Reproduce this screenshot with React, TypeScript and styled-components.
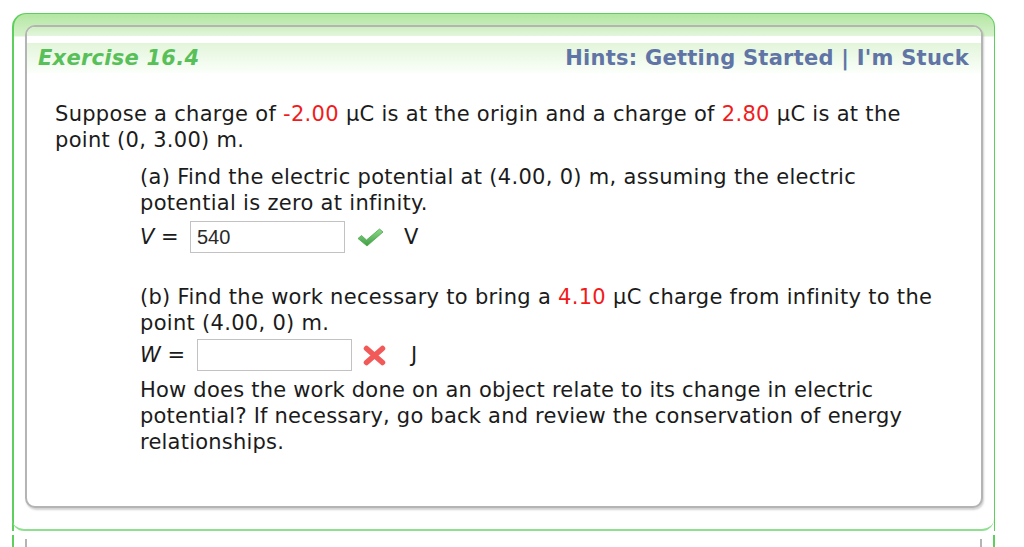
import React from 'react';
import styled, { createGlobalStyle } from 'styled-components';

const GlobalStyle = createGlobalStyle`
  html, body {
    margin: 0;
    padding: 0;
    background: #ffffff;
  }
  body {
    font-family: "DejaVu Sans", Verdana, sans-serif;
    color: #1b1b1b;
  }
`;

const green = '#5ccf5c';

const Page = styled.div`
  width: 1024px;
  height: 547px;
  overflow: hidden;
  padding-top: 13px;
  box-sizing: border-box;
`;

const Frame = styled.div`
  margin-left: 12px;
  width: 983px;
  box-sizing: border-box;
  border: 1px solid ${green};
  border-left-width: 2px;
  border-bottom: none;
  border-radius: 14px 14px 0 0;
  padding: 11px 11px 0 11px;
  background: linear-gradient(to bottom, #b3e6a2 0px, #d6f2cb 22px, #ffffff 23px);
`;

const Panel = styled.div`
  height: 483px;
  box-sizing: border-box;
  border: 2px solid #b4b4b4;
  border-radius: 10px;
  background: #ffffff;
  box-shadow: 1px 2px 2px rgba(0, 0, 0, 0.18);
  overflow: hidden;
`;

const PanelCap = styled.div`
  height: 9px;
  background: linear-gradient(to bottom, #cfefc2, #e3f6dc);
`;

const Header = styled.div`
  margin-top: 7px;
  height: 30px;
  display: flex;
  align-items: center;
  justify-content: space-between;
  padding: 0 12px 0 11px;
  background: linear-gradient(to bottom, #e2f5da, #fbfffa);
  font-size: 21px;
  font-weight: bold;
  letter-spacing: 0.25px;
`;

const Title = styled.span`
  font-style: italic;
  color: #58c058;
`;

const Hints = styled.span`
  color: #6074a6;
`;

const Body = styled.div`
  padding: 28px 20px 0 28px;
  font-size: 21px;
  line-height: 26px;
  letter-spacing: 0.3px;
`;

const Para = styled.p`
  margin: 0;
  white-space: nowrap;
`;

const Part = styled.div<{ $top: number }>`
  margin-left: 85px;
  margin-top: ${(p) => p.$top}px;
`;

const Red = styled.span`
  color: #f21b1b;
`;

const AnswerRow = styled.div<{ $top: number }>`
  display: flex;
  align-items: center;
  margin-top: ${(p) => p.$top}px;
  height: 32px;
`;

const Label = styled.span<{ $w: number }>`
  width: ${(p) => p.$w}px;
  white-space: nowrap;
  letter-spacing: 0;

  i {
    font-style: italic;
  }
`;

const Field = styled.div`
  width: 155px;
  height: 32px;
  box-sizing: border-box;
  border: 1px solid #c2c2c2;
  padding: 0 6px;
  display: flex;
  align-items: center;
  font-family: "Liberation Sans", Arial, sans-serif;
  font-size: 20px;
  letter-spacing: 0;
  color: #2a2a2a;
`;

const Mark = styled.span<{ $left: number }>`
  display: flex;
  margin-left: ${(p) => p.$left}px;
`;

const Unit = styled.span<{ $left: number }>`
  margin-left: ${(p) => p.$left}px;
`;

const Note = styled(Para)`
  margin-top: 6px;
  letter-spacing: 0.22px;
`;

const BottomRule = styled.div`
  height: 21px;
  margin: 0 -11px 0 -13px;
  border-bottom: 2px solid #8ee08e;
  border-radius: 0 0 12px 12px;
`;

const NextFrame = styled.div`
  margin-left: 12px;
  margin-top: 4px;
  width: 983px;
  height: 20px;
  box-sizing: border-box;
  border-left: 2px solid ${green};
  border-right: 2px solid ${green};
  padding: 4px 11px 0 11px;
`;

const NextPanel = styled.div`
  height: 20px;
  border-left: 2px solid #b4b4b4;
  border-right: 2px solid #b4b4b4;
`;

const CheckIcon = () => (
  <svg width="27" height="19" viewBox="0 0 27 19">
    <defs>
      <linearGradient id="chk" x1="0" y1="0" x2="0" y2="1">
        <stop offset="0" stopColor="#8fd88a" />
        <stop offset="1" stopColor="#3f9e44" />
      </linearGradient>
    </defs>
    <path
      d="M1 10.5 L4.5 7.5 L9.5 12 L22.5 1 L26 4 L10 18 Z"
      fill="url(#chk)"
      stroke="#4caa4f"
      strokeWidth="0.8"
      strokeLinejoin="round"
    />
  </svg>
);

const CrossIcon = () => (
  <svg width="23" height="21" viewBox="0 0 23 21">
    <g stroke="#f25a5a" strokeWidth="5.5" strokeLinecap="round">
      <line x1="3.5" y1="3.5" x2="19.5" y2="17.5" />
      <line x1="19.5" y1="3.5" x2="3.5" y2="17.5" />
    </g>
  </svg>
);

const App = () => (
  <React.Fragment>
    <GlobalStyle />
    <Page>
      <Frame>
        <Panel>
          <PanelCap />
          <Header>
            <Title>Exercise 16.4</Title>
            <Hints>Hints: Getting Started | I'm Stuck</Hints>
          </Header>
          <Body>
            <Para>
              Suppose a charge of <Red>-2.00</Red> μC is at the origin and a charge of{' '}
              <Red>2.80</Red> μC is at the
              <br />
              point (0, 3.00) m.
            </Para>
            <Part $top={11}>
              <Para>
                (a) Find the electric potential at (4.00, 0) m, assuming the electric
                <br />
                potential is zero at infinity.
              </Para>
              <AnswerRow $top={5}>
                <Label $w={50}>
                  <i>V</i> =
                </Label>
                <Field>540</Field>
                <Mark $left={12}>
                  <CheckIcon />
                </Mark>
                <Unit $left={20}>V</Unit>
              </AnswerRow>
            </Part>
            <Part $top={31}>
              <Para>
                (b) Find the work necessary to bring a <Red>4.10</Red> μC charge from
                infinity to the
                <br />
                point (4.00, 0) m.
              </Para>
              <AnswerRow $top={3}>
                <Label $w={57}>
                  <i>W</i> =
                </Label>
                <Field />
                <Mark $left={11}>
                  <CrossIcon />
                </Mark>
                <Unit $left={25}>J</Unit>
              </AnswerRow>
              <Note>
                How does the work done on an object relate to its change in electric
                <br />
                potential? If necessary, go back and review the conservation of energy
                <br />
                relationships.
              </Note>
            </Part>
          </Body>
        </Panel>
        <BottomRule />
      </Frame>
      <NextFrame>
        <NextPanel />
      </NextFrame>
    </Page>
  </React.Fragment>
);

export default App;
